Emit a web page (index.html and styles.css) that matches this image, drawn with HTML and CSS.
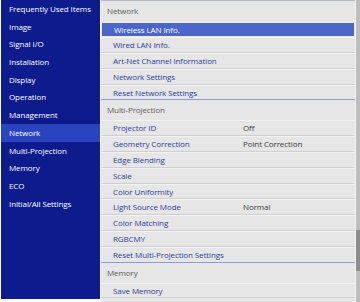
FILE: index.html
```html
<!DOCTYPE html>
<html>
<head>
<meta charset="utf-8">
<link rel="stylesheet" href="styles.css">
</head>
<body>
<div class="screen">
  <nav class="sidebar">
    <div class="nav-item">Frequently Used Items</div>
    <div class="nav-item">Image</div>
    <div class="nav-item">Signal I/O</div>
    <div class="nav-item">Installation</div>
    <div class="nav-item">Display</div>
    <div class="nav-item">Operation</div>
    <div class="nav-item">Management</div>
    <div class="nav-item active">Network</div>
    <div class="nav-item">Multi-Projection</div>
    <div class="nav-item">Memory</div>
    <div class="nav-item">ECO</div>
    <div class="nav-item">Initial/All Settings</div>
  </nav>
  <main class="panel">
    <div class="list">
      <div class="header first">Network</div>
      <div class="row selected"><span class="label">Wireless LAN Info.</span></div>
      <div class="row"><span class="label">Wired LAN Info.</span></div>
      <div class="row"><span class="label">Art-Net Channel Information</span></div>
      <div class="row"><span class="label">Network Settings</span></div>
      <div class="row last"><span class="label">Reset Network Settings</span></div>
      <div class="header">Multi-Projection</div>
      <div class="row"><span class="label">Projector ID</span><span class="value">Off</span></div>
      <div class="row"><span class="label">Geometry Correction</span><span class="value">Point Correction</span></div>
      <div class="row"><span class="label">Edge Blending</span></div>
      <div class="row"><span class="label">Scale</span></div>
      <div class="row"><span class="label">Color Uniformity</span></div>
      <div class="row"><span class="label">Light Source Mode</span><span class="value">Normal</span></div>
      <div class="row"><span class="label">Color Matching</span></div>
      <div class="row"><span class="label">RGBCMY</span></div>
      <div class="row last"><span class="label">Reset Multi-Projection Settings</span></div>
      <div class="header">Memory</div>
      <div class="row"><span class="label">Save Memory</span></div>
    </div>
    <div class="scrollbar"><div class="thumb"></div></div>
  </main>
</div>
</body>
</html>
```
FILE: styles.css
```css
html, body {
  margin: 0;
  padding: 0;
  background: #ffffff;
}
body {
  font-family: "Open Sans", "Noto Sans", sans-serif;
  font-size: 8px;
  font-weight: 500;
  letter-spacing: -0.1px;
}
.screen {
  display: flex;
  width: 360px;
  height: 302px;
  overflow: hidden;
}
.sidebar {
  width: 99px;
  margin-left: 1px;
  height: 299px;
  background: #0d1b8c;
  flex-shrink: 0;
}
.nav-item {
  height: 17.7px;
  line-height: 17.7px;
  padding-left: 8px;
  color: #ffffff;
  white-space: nowrap;
}
.nav-item.active {
  background: #2a44c0;
}
.panel {
  flex: 1;
  display: flex;
  background: #e6e6e6;
  border-left: 1px solid #f6f6f6;
}
.list {
  flex: 1;
  display: flex;
  flex-direction: column;
}
.header {
  height: 20px;
  line-height: 20px;
  padding-left: 6px;
  color: #5a5a5a;
  font-weight: 400;
  box-sizing: border-box;
}
.header.first {
  height: 21.5px;
  border-top: 1.5px solid #b4b8c8;
  line-height: 19px;
}
.row {
  height: 15.8px;
  box-sizing: border-box;
  display: flex;
  align-items: center;
  padding-left: 12px;
  color: #2c3c9e;
  border-bottom: 1px solid #d0d0d0;
  box-shadow: inset 0 1px 0 #f2f2f2;
  white-space: nowrap;
}
.row.last {
  border-bottom: 1.5px solid #8e9ad6;
}
.row.selected {
  background: #4a66c9;
  color: #ffffff;
  box-shadow: none;
  border: 1px solid #f0ecc0;
}
.label {
  width: 130px;
  flex-shrink: 0;
}
.value {
  color: #3a3a3a;
}
.scrollbar {
  width: 4px;
  flex-shrink: 0;
  background: #bdbdbd;
  border-left: 1px solid #f2f2f2;
  display: flex;
  flex-direction: column;
  padding-top: 230px;
}
.thumb {
  height: 41px;
  background: #8c8c8c;
}
```
